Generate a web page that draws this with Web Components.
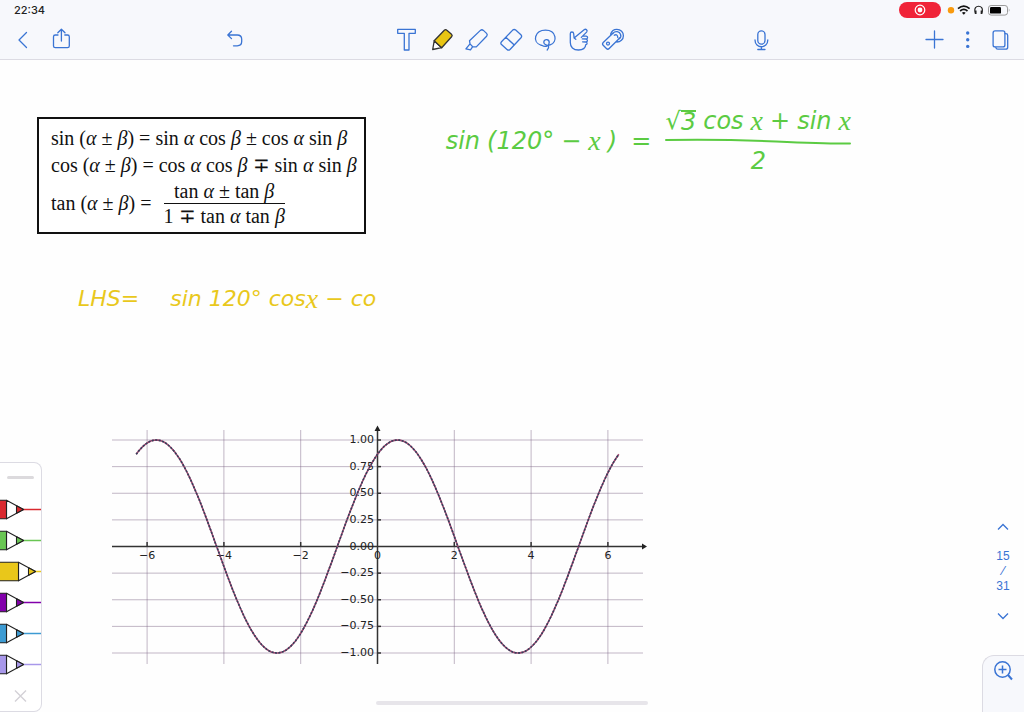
<!DOCTYPE html>
<html lang="en">
<head>
  <meta charset="utf-8">
  <meta name="viewport" content="width=device-width, initial-scale=1">
  <title>Notes</title>
  <style>
    body {
      margin: 0;
      font-family: Inter, "Liberation Sans", sans-serif;
      --blue: #3a74d4;
      --bar: #f7f8fc;
      --line: #dcdbe3;
    }
  </style>
</head>
<body>
  <note-app></note-app>

  <script>
    class StatusBar extends HTMLElement {
      constructor() {
        super();
        this.attachShadow({ mode: 'open' });
        this.shadowRoot.innerHTML = `
          <style>
            :host {
              display: flex;
              align-items: center;
              justify-content: space-between;
              height: 20px;
              padding: 0 14px;
              color: #222;
              font-size: 11px;
              font-weight: 500;
            }
            .right {
              display: flex;
              align-items: center;
              gap: 6px;
            }
            .record {
              display: flex;
              align-items: center;
              justify-content: center;
              width: 42px;
              height: 16px;
              border-radius: 8px;
              background: #f02338;
            }
            svg {
              display: block;
            }
          </style>
          <time>22:34</time>
          <div class="right">
            <span class="record">
              <svg width="12" height="12" viewBox="0 0 12 12">
                <circle cx="6" cy="6" r="4.8" fill="none" stroke="#fff" stroke-width="1.2"/>
                <circle cx="6" cy="6" r="2.4" fill="#fff"/>
              </svg>
            </span>
            <svg width="63" height="14" viewBox="0 0 63 14">
              <circle cx="4" cy="7.3" r="3.2" fill="#f99a0e"/>
              <g fill="none" stroke="#111" stroke-width="1.7">
                <path d="M11 5.6q5.8-5 11.6 0"/>
                <path d="M13.1 8q3.7-3.2 7.4 0"/>
              </g>
              <path d="M14.9 9.7q1.9-1.5 3.8 0l-1.9 2z" fill="#111"/>
              <path d="M28.4 10.2c-2-5.6 1.2-7 3.2-7s5.2 1.4 3.2 7" fill="none" stroke="#222" stroke-width="1.1"/>
              <path d="M28.7 7.5v3.5M34.5 7.5v3.5" stroke="#222" stroke-width="1.7"/>
              <rect x="41.5" y="2.5" width="19" height="9.6" rx="2.6" fill="none" stroke="#999"/>
              <rect x="43" y="4" width="11" height="6.6" rx="1.2" fill="#000"/>
              <path d="M61.8 5.6q1.4 1.6 0 3.2z" fill="#999"/>
            </svg>
          </div>
        `;
      }
    }

    customElements.define('status-bar', StatusBar);

    const ICONS = {
      back: '<path d="M20.5 9.5 13 17l7.5 7.5"/>',
      share: '<path d="M14 12h-2.7q-1.8 0-1.8 1.8v9.1q0 1.8 1.8 1.8h12.2q1.8 0 1.8-1.8v-9.1q0-1.8-1.8-1.8h-2.7M17.4 18V6.3M13.8 9.8l3.6-3.6L21 9.8"/>',
      undo: '<path d="M14.5 8.3 10.8 12l3.7 3.6M11 12h9.2q4.5 0 4.5 4.2v2.4q0 4.2-4.5 4.2h-3.7"/>',
      text: '<path d="M7.7 6.3h17.6v4h-6.3V27h-4.7V10.3H7.7z"/>',
      pen: '<path d="M10.2 17.8 8.7 26.5l9-1.8z" fill="#fff" stroke="#333"/><path d="M10.2 17.8 20.3 7.2q1.3-1.2 2.6 0l4.6 4q1.3 1.3.1 2.6L17.7 24.7z" fill="#e9c512" stroke="#333"/>',
      marker: '<path d="M11.5 17.7 22.4 7.4q1.5-1.3 3 0l3.2 3q1.3 1.4 0 2.9L18.3 23.9l-3.6-.2-2.2 3.1-4.6-.9 4.1-5z M12 20.9l2.7 2.8"/>',
      eraser: '<path d="M20.7 7.1q1.5-1.3 3 0l5.2 4.7q1.4 1.4.1 2.9L18 26.5q-1.5 1.3-3 0l-5.5-4.9q-1.3-1.4 0-2.9zM13.9 14.3l8.4 7.8"/>',
      lasso: '<path d="M15.3 22.3C5.3 19 9 7.2 19.5 7.2c11 0 12.5 12 4.6 14.7-2.7 1-6.3.1-6.3-2.6 0-3.8 5.7-3.3 5.4.5-.2 3-3.4 4.9-7.6 2.5M22.5 22.8q.7 2.3-1.3 4.2"/>',
      hand: '<path d="M10.3 19.5V10.8c0-2.4 3.2-2.4 3.4 0l.4 4.2 10-8.2c1.8-1.4 3.9.7 2.5 2.3l-5.3 5.3M14.1 15l1.7 1.3M23 12.8l3.2.4c2 .5 1.7 2.7-.1 2.8l-3.8-.1M25.9 16c2 .2 2 2.9.1 3l-3.4-.2M26 19c1.5.5 1.4 2.5-.2 2.6-.4 3.7-3.3 5.4-7.3 5.4-5.3 0-8.2-2.9-8.2-7.5"/>',
      tape: '<path d="M16.6 11.1C17.6 8 20 6.3 22.8 6.3c4.1 0 6.6 3.1 6.6 6.4 0 3.7-3 6.4-6.7 6.3M18.9 10.2l-9.7 9.3q-1.4 1.4 0 2.8l3.2 3.2q1.4 1.4 2.8 0L26 14.8"/><path d="M18.9 10.2c2.5-2.7 6.6-1.7 7.6 1 .7 1.8.4 3.5-1.3 4.5M20.3 12.2q3.2-1.6 3.5 2.3"/><circle cx="14" cy="20.6" r="1.5"/>',
      mic: '<rect x="13.8" y="7.8" width="7.2" height="13.4" rx="3.6"/><path d="M11 17c0 9 12.8 9 12.8 0M17.4 23.8v2.6M13.8 26.5h7.2"/>',
      plus: '<path d="M9 16.5h17M17.5 8v17"/>',
      more: '<g fill="currentColor" stroke="none"><circle cx="16.7" cy="10" r="1.7"/><circle cx="16.7" cy="16.7" r="1.7"/><circle cx="16.7" cy="23.4" r="1.7"/></g>',
      pages: '<rect x="8.1" y="7.9" width="11.8" height="16" rx="2"/><path d="M20 10.7h.9q1.8 0 1.8 1.8v11.7q0 2-2 2h-7.9q-1.7 0-2-1.8"/>'
    };

    class ToolButton extends HTMLElement {
      constructor() {
        super();
        this.attachShadow({ mode: 'open' });
        this.shadowRoot.innerHTML = `
          <style>
            :host {
              display: block;
            }
            button {
              display: block;
              padding: 0;
              border: none;
              background: none;
              color: var(--blue);
              cursor: pointer;
            }
            svg {
              display: block;
              fill: none;
              stroke: currentColor;
              stroke-width: 1.3;
              stroke-linecap: round;
              stroke-linejoin: round;
            }
          </style>
          <button type="button"><svg width="34" height="34" viewBox="0 0 34 34"></svg></button>
        `;
      }

      connectedCallback() {
        const name = this.getAttribute('icon');
        this.shadowRoot.querySelector('button').setAttribute('aria-label', name);
        this.shadowRoot.querySelector('svg').innerHTML = ICONS[name];
      }
    }

    customElements.define('tool-button', ToolButton);

    class NoteToolbar extends HTMLElement {
      constructor() {
        super();
        this.attachShadow({ mode: 'open' });
        this.shadowRoot.innerHTML = `
          <style>
            :host {
              display: flex;
              padding: 3px 5px 2px 6px;
            }
            .group {
              display: flex;
            }
            .start {
              gap: 4px;
            }
            .space {
              flex: 6;
            }
            .space.short {
              flex: 5;
            }
          </style>
          <div class="group start">
            <tool-button icon="back"></tool-button>
            <tool-button icon="share"></tool-button>
          </div>
          <div class="space"></div>
          <tool-button icon="undo"></tool-button>
          <div class="space"></div>
          <div class="group">
            <tool-button icon="text"></tool-button>
            <tool-button icon="pen"></tool-button>
            <tool-button icon="marker"></tool-button>
            <tool-button icon="eraser"></tool-button>
            <tool-button icon="lasso"></tool-button>
            <tool-button icon="hand"></tool-button>
            <tool-button icon="tape"></tool-button>
          </div>
          <div class="space short"></div>
          <tool-button icon="mic"></tool-button>
          <div class="space"></div>
          <div class="group">
            <tool-button icon="plus"></tool-button>
            <tool-button icon="more"></tool-button>
            <tool-button icon="pages"></tool-button>
          </div>
        `;
      }
    }

    customElements.define('note-toolbar', NoteToolbar);

    class FormulaCard extends HTMLElement {
      constructor() {
        super();
        this.attachShadow({ mode: 'open' });
        this.shadowRoot.innerHTML = `
          <style>
            :host {
              display: block;
              padding: 6px 7px 4px 12px;
              border: 2px solid #111;
              background: #fff;
              color: #111;
              font-family: "Liberation Serif", serif;
              font-size: 20px;
              line-height: 27px;
              white-space: nowrap;
            }
            .row {
              display: flex;
              align-items: center;
              gap: 12px;
            }
            .fraction {
              text-align: center;
              line-height: 24px;
            }
            .top {
              border-bottom: 1px solid #111;
            }
          </style>
          <div>sin (<i>α</i> ± <i>β</i>) = sin <i>α</i> cos <i>β</i> ± cos <i>α</i> sin <i>β</i></div>
          <div>cos (<i>α</i> ± <i>β</i>) = cos <i>α</i> cos <i>β</i> ∓ sin <i>α</i> sin <i>β</i></div>
          <div class="row">
            <span>tan (<i>α</i> ± <i>β</i>) =</span>
            <div class="fraction">
              <div class="top">tan <i>α</i> ± tan <i>β</i></div>
              <div>1 ∓ tan <i>α</i> tan <i>β</i></div>
            </div>
          </div>
        `;
      }
    }

    customElements.define('formula-card', FormulaCard);

    // a line of handwriting, one span per word
    class InkLine extends HTMLElement {
      constructor() {
        super();
        this.attachShadow({ mode: 'open' });
        this.shadowRoot.innerHTML = `
          <style>
            :host {
              display: flex;
              align-items: center;
              gap: 7px;
              font-family: "DejaVu Sans", sans-serif;
              font-size: 24px;
              font-style: italic;
              line-height: 28px;
              white-space: nowrap;
            }
            :host([small]) {
              font-size: 22px;
            }
          </style>
          <slot></slot>
        `;
      }
    }

    customElements.define('ink-line', InkLine);

    class InkFraction extends HTMLElement {
      constructor() {
        super();
        this.attachShadow({ mode: 'open' });
        this.shadowRoot.innerHTML = `
          <style>
            :host {
              display: flex;
              flex-direction: column;
              align-items: center;
            }
            svg {
              display: block;
              width: 100%;
              height: 12px;
              fill: none;
              stroke: currentColor;
              stroke-width: 2;
              stroke-linecap: round;
            }
          </style>
          <slot name="top"></slot>
          <svg viewBox="0 0 186 12" preserveAspectRatio="none"><path d="M1 5q55-1 110 1.5t74 2"/></svg>
          <slot name="bottom"></slot>
        `;
      }
    }

    customElements.define('ink-fraction', InkFraction);

    class SineChart extends HTMLElement {
      constructor() {
        super();
        this.attachShadow({ mode: 'open' });
        this.shadowRoot.innerHTML = `
          <style>
            :host {
              display: block;
            }
            svg {
              display: block;
              font-family: "DejaVu Sans", sans-serif;
              font-size: 11px;
              fill: #222;
            }
            .grid {
              stroke: #776080;
              stroke-opacity: .45;
            }
            .axis {
              stroke: #333;
              stroke-width: 1.5;
            }
            .curve {
              fill: none;
              stroke-width: 1.6;
            }
          </style>
          <svg width="540" height="244" viewBox="0 0 540 244" role="img" aria-label="sine curve"></svg>
        `;
        this.shadowRoot.querySelector('svg').innerHTML = this.draw();
      }

      px(x) {
        return 266.5 + x * 38.4;
      }

      py(y) {
        return 122.5 - y * 106.5;
      }

      draw() {
        const minus = value => String(value).replace('-', '−');
        let grid = '';
        let ticks = '';
        let labels = '';
        for (let x = -6; x <= 6; x += 2) {
          const p = this.px(x);
          if (x) {
            grid += `<path d="M${p} 6v234"/>`;
            ticks += `<path d="M${p} 122v-4"/>`;
          }
          labels += `<text x="${p}" y="135" text-anchor="middle">${minus(x)}</text>`;
        }
        for (let i = -4; i <= 4; i++) {
          const p = this.py(i / 4);
          if (i) {
            grid += `<path d="M1 ${p}h531"/>`;
            ticks += `<path d="M266 ${p}h4"/>`;
          }
          labels += `<text x="263" y="${p + 3}" text-anchor="end">${minus((i / 4).toFixed(2))}</text>`;
        }
        const points = [];
        for (let i = 0; i <= 200; i++) {
          const x = -2 * Math.PI + i * Math.PI / 50;
          points.push(this.px(x).toFixed(1) + ',' + this.py(Math.sin(2 * Math.PI / 3 - x)).toFixed(1));
        }
        return `
          <g class="grid">${grid}</g>
          <g class="axis"><path d="M1 122.5h531M266.5 240V6"/>${ticks}</g>
          <path d="M531 119.5l5 3-5 3M263.5 7l3-5.5 3 5.5z"/>
          ${labels}
          <polyline class="curve" stroke="#a0466e" points="${points.join(' ')}"/>
          <polyline class="curve" stroke="#34405c" stroke-dasharray="2 1.5" points="${points.join(' ')}"/>
        `;
      }
    }

    customElements.define('sine-chart', SineChart);

    class PenDock extends HTMLElement {
      constructor() {
        super();
        this.attachShadow({ mode: 'open' });
        const pens = [
          ['red', '#d9292f'],
          ['green', '#69c653'],
          ['yellow', '#e9c71a', 12],
          ['purple', '#8200ab'],
          ['blue', '#3d9bd3'],
          ['lavender', '#a898ea']
        ];
        this.shadowRoot.innerHTML = `
          <style>
            :host {
              display: flex;
              flex-direction: column;
              width: 41px;
              border: 1px solid var(--line);
              border-left: none;
              border-radius: 0 8px 8px 0;
              background: #fff;
            }
            .handle {
              width: 27px;
              height: 3px;
              margin: 13px 0 15px 7px;
              border-radius: 2px;
              background: #dcdadd;
            }
            button {
              display: block;
              padding: 0;
              border: none;
              background: none;
              cursor: pointer;
            }
            svg {
              display: block;
            }
          </style>
          <div class="handle"></div>
          ${pens.map(([name, color, out = 0]) => `
            <button type="button" aria-label="${name} pen">
              <svg width="41" height="31" viewBox="0 0 41 31">
                <path d="M${22 + out} 15.5H41" stroke="${color}" stroke-width="1.5"/>
                <g stroke="#222" stroke-width="1.1" stroke-linejoin="round">
                  <path d="M${6.5 + out} 6.2 ${23.5 + out} 15.5 ${6.5 + out} 24.8z" fill="#fff"/>
                  <path d="M${16.5 + out} 11.7l7 3.8-7 3.8z" fill="${color}"/>
                  <path d="M-2 6.2H${6.5 + out}V24.8H-2z" fill="${color}"/>
                </g>
              </svg>
            </button>`).join('')}
          <button type="button" aria-label="close">
            <svg width="41" height="31" viewBox="0 0 41 31">
              <path d="M15 10.5l11 11M26 10.5l-11 11" stroke="#d3d1d6" stroke-width="1.4"/>
            </svg>
          </button>
        `;
      }
    }

    customElements.define('pen-dock', PenDock);

    class PageNav extends HTMLElement {
      constructor() {
        super();
        this.attachShadow({ mode: 'open' });
        this.shadowRoot.innerHTML = `
          <style>
            :host {
              display: flex;
              flex-direction: column;
              align-items: center;
              color: var(--blue);
              font-family: "Liberation Sans", sans-serif;
              font-size: 12px;
              line-height: 15px;
            }
            button {
              padding: 8px;
              border: none;
              background: none;
              color: inherit;
              cursor: pointer;
            }
            svg {
              display: block;
              fill: none;
              stroke: currentColor;
              stroke-width: 1.3;
            }
            .count {
              display: flex;
              flex-direction: column;
              align-items: center;
              padding: 10px 0;
            }
            .slash {
              font-family: "DejaVu Sans", sans-serif;
            }
          </style>
          <button type="button" aria-label="previous page">
            <svg width="12" height="8" viewBox="0 0 12 8"><path d="M1 6.5l5-5 5 5"/></svg>
          </button>
          <div class="count">
            <span>15</span>
            <span class="slash">⁄</span>
            <span>31</span>
          </div>
          <button type="button" aria-label="next page">
            <svg width="12" height="8" viewBox="0 0 12 8"><path d="M1 1.5l5 5 5-5"/></svg>
          </button>
        `;
      }
    }

    customElements.define('page-nav', PageNav);

    class ZoomButton extends HTMLElement {
      constructor() {
        super();
        this.attachShadow({ mode: 'open' });
        this.shadowRoot.innerHTML = `
          <style>
            :host {
              display: block;
              border: 1px solid var(--line);
              border-width: 1px 0 0 1px;
              border-radius: 12px 0 0 0;
              background: var(--bar);
            }
            button {
              display: block;
              padding: 4px 10px 30px;
              border: none;
              background: none;
              color: var(--blue);
              cursor: pointer;
            }
            svg {
              display: block;
              fill: none;
              stroke: currentColor;
              stroke-width: 1.5;
            }
          </style>
          <button type="button" aria-label="zoom in">
            <svg width="21" height="22" viewBox="0 0 21 22">
              <circle cx="9.5" cy="9.5" r="7.7"/>
              <path d="M15 15l4 4.500" stroke-width="2"/>
              <path d="M5.5 9.5h8M9.5 5.5v8"/>
            </svg>
          </button>
        `;
      }
    }

    customElements.define('zoom-button', ZoomButton);

    class NoteApp extends HTMLElement {
      constructor() {
        super();
        this.attachShadow({ mode: 'open' });
        this.shadowRoot.innerHTML = `
          <style>
            :host {
              display: flex;
              flex-direction: column;
              position: relative;
              min-height: 100vh;
              overflow: hidden;
              background: #fefefe;
            }
            header {
              border-bottom: 1px solid var(--line);
              background: var(--bar);
            }
            main {
              flex: 1;
              padding: 57px 37px 0;
            }
            .row {
              display: flex;
              align-items: flex-start;
              gap: 80px;
            }
            .green {
              color: #5bcb42;
            }
            .yellow {
              color: #e9c81c;
            }
            .question {
              display: flex;
              align-items: center;
              gap: 14px;
              margin-top: -10px;
            }
            .answer {
              margin: 51px 0 0 41px;
            }
            .first {
              margin-left: 24px;
            }
            .x {
              font-family: "Liberation Serif", serif;
              font-size: 28px;
            }
            .root {
              border-top: 2px solid;
              line-height: 20px;
            }
            .pair {
              display: flex;
              align-items: center;
            }
            sine-chart {
              margin: 111px 0 0 74px;
            }
            .home {
              width: 272px;
              height: 4px;
              margin: 0 auto 7px;
              border-radius: 2px;
              background: #e7e5ea;
            }
            pen-dock, page-nav, zoom-button {
              position: absolute;
            }
            pen-dock {
              bottom: 0;
              left: 0;
            }
            page-nav {
              right: 7px;
              bottom: 84px;
            }
            zoom-button {
              right: 0;
              bottom: 0;
            }
          </style>
          <header>
            <status-bar></status-bar>
            <note-toolbar></note-toolbar>
          </header>
          <main>
            <div class="row">
              <formula-card></formula-card>
              <div class="question green">
                <ink-line><span>sin</span><span>(120°</span><span>−</span><span class="x">x</span><span>)</span></ink-line>
                <ink-line>=</ink-line>
                <ink-fraction>
                  <ink-line slot="top"><span class="pair">√<span class="root">3</span></span><span>cos</span><span class="x">x</span><span>+</span><span>sin</span><span class="x">x</span></ink-line>
                  <ink-line slot="bottom">2</ink-line>
                </ink-fraction>
              </div>
            </div>
            <ink-line class="answer yellow" small><span>LHS=</span><span class="first">sin</span><span>120°</span><span class="pair">cos<span class="x">x</span></span><span>−</span><span>co</span></ink-line>
            <sine-chart></sine-chart>
          </main>
          <div class="home"></div>
          <pen-dock></pen-dock>
          <page-nav></page-nav>
          <zoom-button></zoom-button>
        `;
      }
    }

    customElements.define('note-app', NoteApp);
  </script>
</body>
</html>
